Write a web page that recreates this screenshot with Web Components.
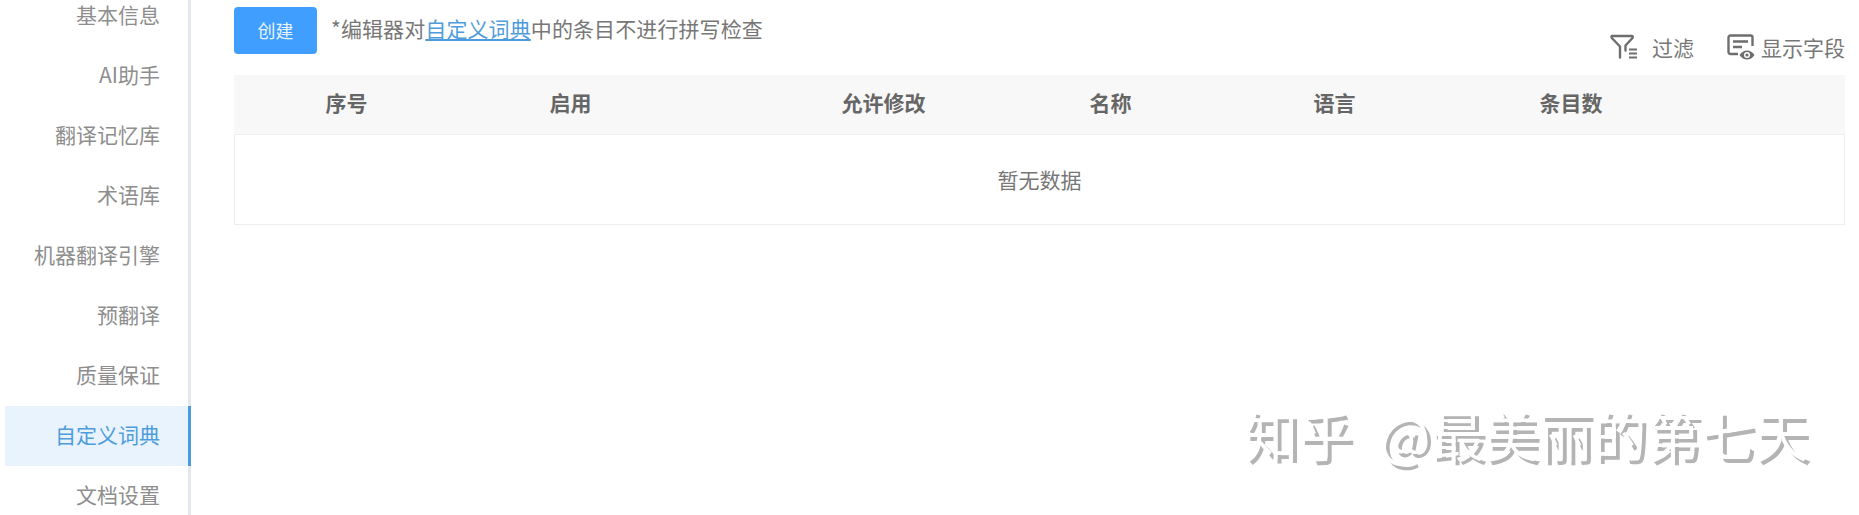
<!DOCTYPE html>
<html lang="zh">
<head>
<meta charset="utf-8">
<style>
  html, body { margin: 0; height: 100%; overflow: hidden; background: #fff; }
  body { font-family: "Noto Sans CJK SC", "Liberation Sans", sans-serif; }
</style>
</head>
<body>
<settings-page>
  <side-menu slot="menu">
    <menu-item>基本信息</menu-item>
    <menu-item>AI助手</menu-item>
    <menu-item>翻译记忆库</menu-item>
    <menu-item>术语库</menu-item>
    <menu-item>机器翻译引擎</menu-item>
    <menu-item>预翻译</menu-item>
    <menu-item>质量保证</menu-item>
    <menu-item active>自定义词典</menu-item>
    <menu-item>文档设置</menu-item>
  </side-menu>
  <dict-toolbar></dict-toolbar>
  <dict-table></dict-table>
  <zhihu-mark>知乎 @最美丽的第七天</zhihu-mark>
</settings-page>

<script>
class SettingsPage extends HTMLElement {
    connectedCallback() {
        this.attachShadow({ mode: 'open' });
        this.shadowRoot.innerHTML = `
            <style>
                :host {
                    display: flex;
                    position: relative;
                    height: 515px;
                    overflow: hidden;
                    font-size: 21px;
                }
                main {
                    flex: 1;
                    padding: 7px 14px 0 43px;
                }
            </style>
            <slot name="menu"></slot>
            <main><slot></slot></main>
        `;
    }
}

class SideMenu extends HTMLElement {
    connectedCallback() {
        this.attachShadow({ mode: 'open' });
        this.shadowRoot.innerHTML = `
            <style>
                :host {
                    display: block;
                    width: 191px;
                    box-sizing: border-box;
                    padding-left: 5px;
                    margin-top: -14px;
                    height: 600px;
                    border-right: 3px solid #e3e7ee;
                }
            </style>
            <slot></slot>
        `;
    }
}

class MenuItem extends HTMLElement {
    connectedCallback() {
        this.attachShadow({ mode: 'open' });
        this.shadowRoot.innerHTML = `
            <style>
                :host {
                    display: block;
                    height: 60px;
                    line-height: 57px;
                    padding-right: 28px;
                    text-align: right;
                    color: #8e8e8e;
                    margin-right: -3px;
                    border-right: 3px solid transparent;
                }
                :host([active]) {
                    color: #4f9cdc;
                    background: #e8f3fd;
                    border-right-color: #4a9be0;
                }
            </style>
            <slot></slot>
        `;
    }
}

class DictToolbar extends HTMLElement {
    connectedCallback() {
        this.attachShadow({ mode: 'open' });
        this.shadowRoot.innerHTML = `
            <style>
                :host {
                    display: flex;
                    height: 68px;
                    color: #777;
                }
                button {
                    width: 83px;
                    height: 47px;
                    padding: 0 0 2px;
                    border: 0;
                    border-radius: 4px;
                    background: #409eff;
                    color: #e8f4ff;
                    font: 18px "Noto Sans CJK SC", sans-serif;
                }
                .hint {
                    margin-left: 14px;
                    height: 47px;
                    line-height: 43px;
                    letter-spacing: 0.1px;
                    flex: 1;
                }
                a {
                    color: #4f9cdc;
                    text-decoration: underline;
                }
                .tools {
                    display: flex;
                    gap: 33px;
                    padding-top: 27px;
                    line-height: 27px;
                }
                .tool {
                    display: flex;
                    align-items: flex-start;
                    gap: 6px;
                }
                .tool.filter { gap: 15px; }
                svg { display: block; }
            </style>
            <button>创建</button>
            <div class="hint">*编辑器对<a href="#">自定义词典</a>中的条目不进行拼写检查</div>
            <div class="tools">
                <div class="tool filter">
                    <svg width="28" height="25" viewBox="0 0 28 25" fill="none" stroke="#6e6e6e" stroke-width="2.4" stroke-linejoin="round" stroke-linecap="round">
                        <path d="M3.500 2H22.500Q24.500 2 23.500 4L16.500 11.500V16.500"/>
                        <path d="M3.500 2Q1.800 2 2.800 4L11 12.500V23.500"/>
                        <path d="M20 15.500H28M20 19.500H28M20 23.500H28" stroke-width="2" stroke-linecap="butt"/>
                    </svg>
                    <span>过滤</span>
                </div>
                <div class="tool">
                    <svg width="28" height="26" viewBox="0 0 28 26" fill="none" stroke="#6e6e6e" stroke-width="2.400">
                        <path d="M11 20H3.500a2 2 0 0 1-2-2V3.500a2 2 0 0 1 2-2h20a2 2 0 0 1 2 2V12"/>
                        <path d="M6 7.500h15M6 13h9"/>
                        <path d="M12.500 21c2-3 4.500-4.500 7.500-4.500s5.500 1.500 7.500 4.500c-2 3-4.500 4.500-7.500 4.500s-5.500-1.500-7.500-4.500z" fill="#6e6e6e" stroke="none"/>
                        <circle cx="20" cy="21" r="3" fill="#fff" stroke="none"/>
                        <circle cx="20" cy="21" r="1.600" fill="#6e6e6e" stroke="none"/>
                    </svg>
                    <span>显示字段</span>
                </div>
            </div>
        `;
    }
}

class DictTable extends HTMLElement {
    connectedCallback() {
        this.attachShadow({ mode: 'open' });
        const heads = ['序号', '启用', '允许修改', '名称', '语言', '条目数'];
        this.shadowRoot.innerHTML = `
            <style>
                :host {
                    display: block;
                    border: 1px solid #eee;
                    border-top: 0;
                    color: #777;
                }
                .head {
                    display: grid;
                    grid-template-columns: 224px 292px 248px 224px 226px 1fr;
                    height: 59px;
                    line-height: 55px;
                    padding-left: 91.500px;
                    margin-left: -1px;
                    margin-right: -1px;
                    background: #f8f8f8;
                    border-bottom: 1px solid #eee;
                    color: #666;
                    font-weight: bold;
                }
                .empty {
                    height: 89px;
                    line-height: 89px;
                    text-align: center;
                }
            </style>
            <div class="head">${heads.map(h => `<span>${h}</span>`).join('')}</div>
            <div class="empty">暂无数据</div>
        `;
    }
}

class ZhihuMark extends HTMLElement {
    connectedCallback() {
        this.attachShadow({ mode: 'open' });
        this.shadowRoot.innerHTML = `
            <style>
                :host {
                    position: absolute;
                    left: 1244px;
                    top: 396px;
                    font-size: 54px;
                    line-height: 76px;
                    word-spacing: 15px;
                    white-space: nowrap;
                    color: #fff;
                    text-shadow: 4px 4px 0 #b4b4b4;
                }
            </style>
            <slot></slot>
        `;
    }
}

customElements.define('settings-page', SettingsPage);
customElements.define('side-menu', SideMenu);
customElements.define('menu-item', MenuItem);
customElements.define('dict-toolbar', DictToolbar);
customElements.define('dict-table', DictTable);
customElements.define('zhihu-mark', ZhihuMark);
</script>
</body>
</html>
